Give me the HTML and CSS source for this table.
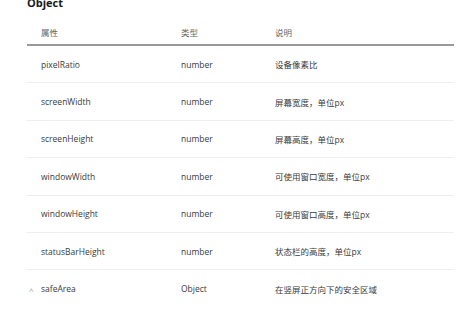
FILE: index.html
```html
<!DOCTYPE html>
<html lang="zh">
<head>
    <meta charset="UTF-8">
    <meta name="viewport" content="width=device-width, initial-scale=1.0">
    <title>Object</title>
    <link rel="stylesheet" href="styles.css">
</head>
<body>
    <div class="container">
        <h3 class="title">Object</h3>
        <table class="param-table">
            <thead>
                <tr>
                    <th class="col-name">属性</th>
                    <th class="col-type">类型</th>
                    <th class="col-desc">说明</th>
                </tr>
            </thead>
            <tbody>
                <tr>
                    <td>pixelRatio</td>
                    <td>number</td>
                    <td>设备像素比</td>
                </tr>
                <tr>
                    <td>screenWidth</td>
                    <td>number</td>
                    <td>屏幕宽度，单位px</td>
                </tr>
                <tr>
                    <td>screenHeight</td>
                    <td>number</td>
                    <td>屏幕高度，单位px</td>
                </tr>
                <tr>
                    <td>windowWidth</td>
                    <td>number</td>
                    <td>可使用窗口宽度，单位px</td>
                </tr>
                <tr>
                    <td>windowHeight</td>
                    <td>number</td>
                    <td>可使用窗口高度，单位px</td>
                </tr>
                <tr>
                    <td>statusBarHeight</td>
                    <td>number</td>
                    <td>状态栏的高度，单位px</td>
                </tr>
                <tr class="expandable">
                    <td><span class="toggle">^</span>safeArea</td>
                    <td>Object</td>
                    <td>在竖屏正方向下的安全区域</td>
                </tr>
            </tbody>
        </table>
    </div>
</body>
</html>
```

FILE: styles.css
```css
body {
    font-family: "Open Sans", "Noto Sans CJK SC", sans-serif;
    margin: 0;
    background-color: #fff;
    color: #3a3a3a;
}

.container {
    padding: 0 20px 0 27px;
    margin-top: -4px;
}

.title {
    margin: 0;
    font-size: 11px;
    font-weight: bold;
    color: #1a1a1a;
    line-height: 14px;
}

.param-table {
    width: 427px;
    border-collapse: collapse;
    margin-top: 0;
    font-size: 8.5px;
}

.param-table th {
    text-align: left;
    font-weight: normal;
    color: #666;
    height: 28px;
    vertical-align: bottom;
    padding: 0 0 6px 14px;
    border-bottom: 2px solid #999;
}

.param-table td {
    height: 36.4px;
    padding: 0 0 0 14px;
    border-bottom: 1px solid #eee;
}

.param-table tr:last-child td {
    border-bottom: none;
}

.col-name {
    width: 126px;
}

.col-type {
    width: 80px;
}

.expandable td:first-child {
    position: relative;
}

.toggle {
    position: absolute;
    left: 2px;
    top: 50%;
    margin-top: -4px;
    color: #999;
    font-size: 8px;
}
```
